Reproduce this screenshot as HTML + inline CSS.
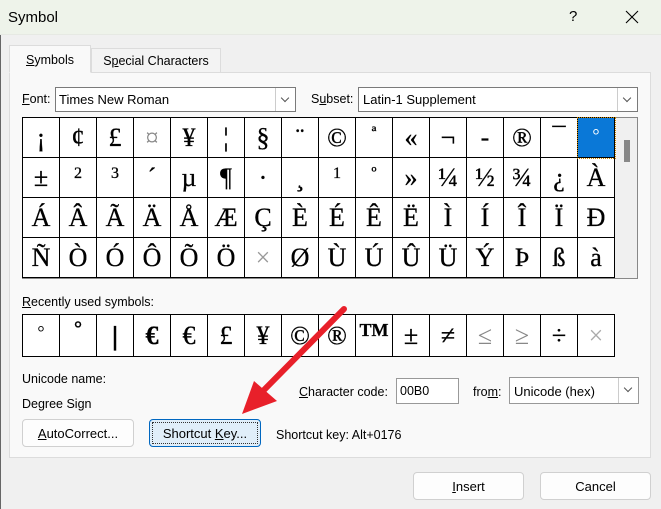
<!DOCTYPE html>
<html><head><meta charset="utf-8"><style>
*{margin:0;padding:0;box-sizing:border-box}
body{width:661px;height:509px;background:#f0f0f0;font-family:"Liberation Sans",sans-serif;font-size:12.5px;color:#000;position:relative;overflow:hidden}
.a{position:absolute}
.title{left:0;top:0;width:661px;height:35px;background:#eef3ea;border-bottom:1px solid #e6e9e3}
.panel{left:9px;top:72px;width:642px;height:386px;background:#f9f9f9;border:1px solid #dcdcdc}
.tab{background:#f9f9f9;border:1px solid #dcdcdc;border-bottom:none;text-align:center}
.box{background:#fff;border:1px solid #7a7a7a}
.dd{position:absolute;right:0;top:0;width:20px;height:100%;border-left:1px solid #ccc;background:#fff}
.dd:after{content:"";position:absolute;left:6px;top:7px;width:5px;height:5px;border-right:1px solid #555;border-bottom:1px solid #555;transform:rotate(45deg)}
table{border-collapse:collapse;font-family:"Liberation Serif",serif;background:#fff}
td{border:1px solid #000;width:37px;height:40px;text-align:center;font-size:26px;padding:0;line-height:1;-webkit-text-stroke:0.3px #000}
.btn{background:#fdfdfd;border:1px solid #d0d0d0;border-radius:4px;text-align:center;font-size:13px}
u{text-decoration:underline}
</style></head><body>
<div class="a" style="left:0;top:0;width:1px;height:509px;background:#666"></div>
<div class="a title"></div>
<div class="a" style="left:8px;top:9px;font-size:15px">Symbol</div>
<div class="a" style="left:569px;top:8px;font-size:15px">?</div>
<svg class="a" style="left:625px;top:10px" width="14" height="14"><path d="M1 1L13 13M13 1L1 13" stroke="#000" stroke-width="1.1"/></svg>
<div class="a panel"></div>
<div class="a tab" style="left:91px;top:48px;width:130px;height:24px;background:#f3f3f3;padding-top:5px">S<u>p</u>ecial Characters</div>
<div class="a tab" style="left:9px;top:45px;width:82px;height:28px;padding-top:7px;border-bottom:1px solid #f9f9f9"><u>S</u>ymbols</div>
<div class="a" style="left:22px;top:92px"><u>F</u>ont:</div>
<div class="a box" style="left:55px;top:87px;width:241px;height:25px;padding:4px 3px;font-size:13px">Times New Roman<div class="dd"></div></div>
<div class="a" style="left:311px;top:92px">S<u>u</u>bset:</div>
<div class="a box" style="left:358px;top:87px;width:280px;height:25px;padding:4px 4px;font-size:13px">Latin-1 Supplement<div class="dd"></div></div>
<div class="a" style="left:22px;top:117px;width:616px;height:162px;border:1px solid #888;background:#f0f0f0"></div>
<div class="a" style="left:624px;top:140px;width:6px;height:22px;background:#888"></div>
<table class="a" style="left:22px;top:117px">
<tr><td>¡</td><td>¢</td><td>£</td><td style="color:#888;-webkit-text-stroke:0">¤</td><td>¥</td><td>¦</td><td>§</td><td>¨</td><td>©</td><td style="font-size:17px;vertical-align:top;padding-top:6px">ª</td><td>«</td><td>¬</td><td>-</td><td>®</td><td>¯</td><td style="background:#0a78d7;color:#fff;-webkit-text-stroke:0;outline:1px dotted #c80;vertical-align:top;padding-top:8px;font-size:18px">°</td></tr>
<tr><td>±</td><td style="font-size:16px;vertical-align:top;padding-top:8px">2</td><td style="font-size:16px;vertical-align:top;padding-top:8px">3</td><td>´</td><td>µ</td><td>¶</td><td>·</td><td>¸</td><td style="font-size:16px;vertical-align:top;padding-top:8px">1</td><td style="font-size:16px;vertical-align:top;padding-top:8px">º</td><td>»</td><td>¼</td><td>½</td><td>¾</td><td>¿</td><td>À</td></tr>
<tr><td>Á</td><td>Â</td><td>Ã</td><td>Ä</td><td>Å</td><td>Æ</td><td>Ç</td><td>È</td><td>É</td><td>Ê</td><td>Ë</td><td>Ì</td><td>Í</td><td>Î</td><td>Ï</td><td>Ð</td></tr>
<tr><td>Ñ</td><td>Ò</td><td>Ó</td><td>Ô</td><td>Õ</td><td>Ö</td><td style="color:#999;-webkit-text-stroke:0">×</td><td>Ø</td><td>Ù</td><td>Ú</td><td>Û</td><td>Ü</td><td>Ý</td><td>Þ</td><td>ß</td><td>à</td></tr>
</table>
<div class="a" style="left:22px;top:295px"><u>R</u>ecently used symbols:</div>
<table class="a" style="left:22px;top:314px;border:1px solid #888">
<tr style="height:42px"><td style="font-size:18px;vertical-align:top;padding-top:8px;-webkit-text-stroke:0">°</td><td style="font-size:22px;vertical-align:top;padding-top:4px;font-family:'Liberation Sans'">°</td><td style="font-family:'Liberation Sans'">|</td><td style="font-weight:bold">€</td><td>€</td><td>£</td><td>¥</td><td>©</td><td>®</td><td style="font-size:18px;font-weight:bold;vertical-align:top;padding-top:6px">TM</td><td>±</td><td>≠</td><td style="color:#888;-webkit-text-stroke:0">≤</td><td style="color:#888;-webkit-text-stroke:0">≥</td><td>÷</td><td style="color:#aaa;-webkit-text-stroke:0">×</td></tr>
</table>
<div class="a" style="left:22px;top:372px">Unicode name:</div>
<div class="a" style="left:22px;top:397px">Degree Sign</div>
<div class="a" style="left:299px;top:385px"><u>C</u>haracter code:</div>
<div class="a box" style="left:396px;top:378px;width:63px;height:26px;padding:5px 3px;border-color:#999">00B0</div>
<div class="a" style="left:473px;top:385px">fro<u>m</u>:</div>
<div class="a box" style="left:509px;top:377px;width:130px;height:27px;padding:6px 4px;border-color:#999;font-size:13px">Unicode (hex)<div class="dd"></div></div>
<div class="a btn" style="left:22px;top:419px;width:112px;height:28px;padding-top:6px"><u>A</u>utoCorrect...</div>
<div class="a btn" style="left:149px;top:419px;width:112px;height:28px;padding-top:6px;background:#e0eef9;border-color:#0067c0"><div style="position:absolute;left:2px;top:2px;right:2px;bottom:2px;border:1px dotted #333"></div>Shortcut <u>K</u>ey...</div>
<div class="a" style="left:276px;top:428px">Shortcut key: Alt+0176</div>
<div class="a btn" style="left:413px;top:472px;width:111px;height:28px;padding-top:6px"><u>I</u>nsert</div>
<div class="a btn" style="left:540px;top:472px;width:111px;height:28px;padding-top:6px">Cancel</div>
<svg class="a" style="left:0;top:0" width="661" height="509"><line x1="344" y1="309" x2="262" y2="392" stroke="#e8202a" stroke-width="6" stroke-linecap="round"/><polygon points="242,414 254,381 277,401" fill="#e8202a"/></svg>
</body></html>
